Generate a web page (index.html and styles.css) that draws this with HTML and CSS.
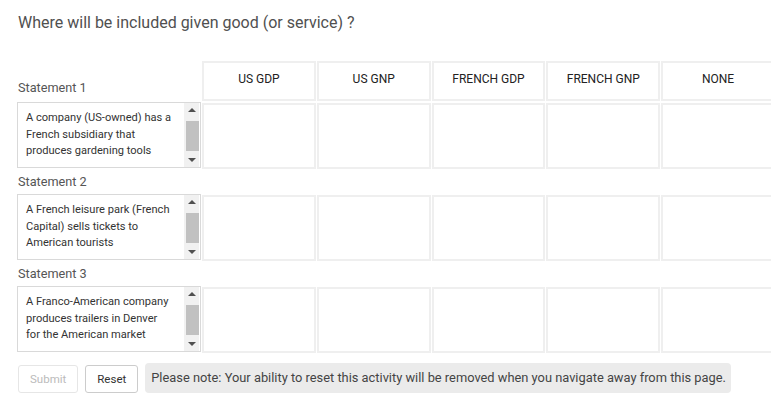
FILE: index.html
```html
<!DOCTYPE html>
<html>
<head>
<meta charset="utf-8">
<link rel="stylesheet" href="styles.css">
</head>
<body>
<h1 class="title">Where will be included given good (or service) ?</h1>
<div class="grid">
  <div class="label first">Statement 1</div>
  <div class="head">US GDP</div>
  <div class="head">US GNP</div>
  <div class="head">FRENCH GDP</div>
  <div class="head">FRENCH GNP</div>
  <div class="head">NONE</div>

  <div class="stmt">
    <p class="stmt-text">A company (US-owned) has a French subsidiary that produces gardening tools</p>
    <div class="sb"><span class="sb-btn"><i class="up"></i></span><span class="sb-track"><i class="thumb"></i></span><span class="sb-btn"><i class="down"></i></span></div>
  </div>
  <div class="cell"></div><div class="cell"></div><div class="cell"></div><div class="cell"></div><div class="cell"></div>

  <div class="label">Statement 2</div>
  <div class="spacer"></div>

  <div class="stmt">
    <p class="stmt-text">A French leisure park (French Capital) sells tickets to American tourists</p>
    <div class="sb"><span class="sb-btn"><i class="up"></i></span><span class="sb-track"><i class="thumb"></i></span><span class="sb-btn"><i class="down"></i></span></div>
  </div>
  <div class="cell"></div><div class="cell"></div><div class="cell"></div><div class="cell"></div><div class="cell"></div>

  <div class="label">Statement 3</div>
  <div class="spacer"></div>

  <div class="stmt">
    <p class="stmt-text">A Franco-American company produces trailers in Denver for the American market</p>
    <div class="sb"><span class="sb-btn"><i class="up"></i></span><span class="sb-track"><i class="thumb"></i></span><span class="sb-btn"><i class="down"></i></span></div>
  </div>
  <div class="cell"></div><div class="cell"></div><div class="cell"></div><div class="cell"></div><div class="cell"></div>
</div>
<div class="actions">
  <button class="btn disabled" disabled>Submit</button>
  <button class="btn">Reset</button>
  <div class="note">Please note: Your ability to reset this activity will be removed when you navigate away from this page.</div>
</div>
</body>
</html>
```

FILE: styles.css
```css
html, body {
  margin: 0;
  padding: 0;
  background: #fff;
  overflow: hidden;
}
body {
  padding: 0 0 0 17px;
  font-family: Roboto, "Liberation Sans", sans-serif;
  color: #333;
  width: 800px;
}
.title {
  margin: 0;
  padding-top: 13px;
  font-size: 16px;
  font-weight: 400;
  line-height: 20px;
  color: #505050;
  padding-left: 1px;
}
.grid {
  margin-top: 28px;
  display: grid;
  grid-template-columns: 184px repeat(5, 113.8px);
  grid-template-rows: 40px 66px 22px 66px 22px 66px;
  column-gap: 1px;
  row-gap: 2px;
}
.label {
  font-size: 12.7px;
  line-height: 22px;
  color: #555;
  padding-left: 1px;
  align-self: center;
}
.label.first {
  align-self: end;
  padding-bottom: 2px;
}
.spacer {
  grid-column: 2 / 7;
}
.head {
  border: 2px solid #efefef;
  font-size: 12px;
  color: #222;
  text-align: center;
  padding-top: 9px;
  box-sizing: border-box;
}
.cell {
  border: 2px solid #efefef;
  box-sizing: border-box;
}
.stmt {
  border: 1px solid #d9d9d9;
  box-sizing: border-box;
  margin-top: -1px;
  height: 66px;
  display: flex;
  padding-right: 1px;
}
.stmt-text {
  flex: 1;
  margin: 0;
  padding: 7px 11px 0 8px;
  font-size: 11.1px;
  line-height: 16.6px;
  color: #333;
}
.sb {
  width: 15px;
  display: flex;
  flex-direction: column;
  background: #f1f1f1;
}
.sb-btn {
  height: 15px;
  display: flex;
  align-items: center;
  justify-content: center;
}
.sb-btn i {
  width: 0;
  height: 0;
  border-left: 4px solid transparent;
  border-right: 4px solid transparent;
}
.sb-btn .up {
  border-bottom: 4px solid #505050;
}
.sb-btn .down {
  border-top: 4px solid #505050;
}
.sb-track {
  flex: 1;
  padding: 3px 0 2px 2px;
  display: flex;
}
.thumb {
  flex: 1;
  background: #c1c1c1;
  height: 30px;
}
.actions {
  display: flex;
  align-items: flex-end;
  gap: 7px;
  margin-top: 10px;
  padding-left: 1px;
}
.btn {
  font-family: Roboto, "Liberation Sans", sans-serif;
  font-size: 11.5px;
  height: 28px;
  background: #fff;
  border: 1px solid #ccc;
  border-radius: 3px;
  color: #333;
  padding: 0 11px;
}
.btn.disabled {
  color: #bbb;
  border-color: #e6e6e6;
}
.note {
  background: #ebebeb;
  border-radius: 4px;
  font-size: 12.85px;
  color: #444;
  padding: 6px 5px 6px 6px;
  line-height: 18px;
}
```
